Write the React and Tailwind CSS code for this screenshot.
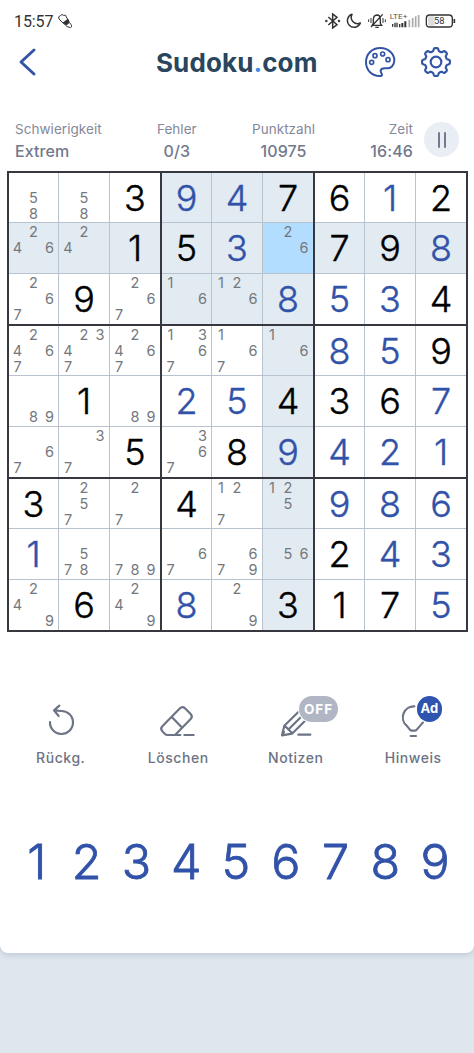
import { useState } from "react"

// value: given digit, "b" prefix: digit entered by the player, "n" prefix: notes
const BOARD = [
  ["n58", "n58", "3", "b9", "b4", "7", "6", "b1", "2"],
  ["n246", "n24", "1", "5", "b3", "n26", "7", "9", "b8"],
  ["n267", "9", "n267", "n16", "n126", "b8", "b5", "b3", "4"],
  ["n2467", "n2347", "n2467", "n1367", "n167", "n16", "b8", "b5", "9"],
  ["n89", "1", "n89", "b2", "b5", "4", "3", "6", "b7"],
  ["n67", "n37", "5", "n367", "8", "b9", "b4", "b2", "b1"],
  ["3", "n257", "n27", "4", "n127", "n125", "b9", "b8", "b6"],
  ["b1", "n578", "n789", "n67", "n679", "n56", "2", "b4", "b3"],
  ["n249", "6", "n249", "b8", "n29", "3", "1", "7", "b5"]
]

const DIGITS = [1, 2, 3, 4, 5, 6, 7, 8, 9]
const BOX = [0, 1, 2]

function gearPath(cx, cy) {
  const points = []
  for (let i = 0; i < 160; i++) {
    const a = (i / 160) * Math.PI * 2
    const r = 37.5 + 4.5 * Math.tanh(2.2 * Math.cos(8 * a))
    points.push(`${(cx + r * Math.cos(a)).toFixed(1)} ${(cy + r * Math.sin(a)).toFixed(1)}`)
  }
  return `M${points.join("L")}Z`
}

function StatusBar() {
  return (
    <div className="flex h-[42px] items-center pl-[14px] pr-[18px] text-[#333]">
      <span className="mt-[2px] font-[Roboto,sans-serif] text-[16px] leading-none tracking-[-0.1px]">15:57</span>
      <svg className="ml-[4px] h-4 w-4" viewBox="170 38 48 48" fill="none" stroke="currentColor" strokeWidth="3" strokeLinejoin="round">
        <path d="M176 56Q172 48 180 46Q184 40 190 45Q198 42 198 50L202 57L188 68Z" />
        <path d="M189 69L203 57L207 66L200 73Z" fill="currentColor" />
        <path d="M190 69Q200 82 211 82Q218 78 208 67" />
      </svg>
      <div className="ml-auto flex items-center">
        <svg className="h-4 w-4" viewBox="270 40 48 48" fill="none" stroke="currentColor" strokeWidth="4.500">
          <path d="M280 52L306 75L293 85V43L306 53L280 76" />
          <circle cx="274" cy="64" r="1.5" />
          <circle cx="312" cy="64" r="1.5" />
        </svg>
        <svg className="ml-[5px] h-4 w-4" viewBox="333 40 48 48" fill="none" stroke="currentColor" strokeWidth="4.5" strokeLinejoin="round">
          <path d="M351 44A20 20 0 1 0 376 70A19 19 0 0 1 351 44Z" />
        </svg>
        <svg className="ml-[5px] h-4 w-5" viewBox="396 40 60 48" fill="none" stroke="currentColor" strokeWidth="4">
          <path d="M411 77H440L436 71V60Q436 46 426 46Q415 47 415 60V71L411 77M421 83H431M443 44L408 82" />
          <path d="M408 55V70M401 59V67M444 55V70M451 59V67" strokeWidth="3" />
        </svg>
        <svg className="ml-[2px] h-4 w-[31px]" viewBox="463 40 93 48">
          <text x="465" y="58" fontSize="24" fontFamily="Roboto, sans-serif" fill="#555" textLength="53" lengthAdjust="spacingAndGlyphs">LTE+</text>
          <path d="M474 73V81M481 69V83M487 69V83M495 73V83" stroke="#333" strokeWidth="4" />
          <path d="M503 70V83M512 65V83" stroke="#333" strokeWidth="6" />
          <path d="M524 60V83M534 55V83M543 50V83M552 46V83" stroke="#aaa" strokeWidth="5" />
        </svg>
        <svg className="ml-[5px] h-4 w-[31px]" viewBox="571 40 93 48">
          <rect x="580" y="50" width="20" height="28" rx="4" fill="#ddd" />
          <rect x="575" y="46" width="78" height="36" rx="10" fill="none" stroke="currentColor" strokeWidth="4" />
          <path d="M659 58V70" stroke="currentColor" strokeWidth="5" />
          <text x="614" y="74" textAnchor="middle" fontSize="28" fontFamily="Roboto, sans-serif" fill="#333">58</text>
        </svg>
      </div>
    </div>
  )
}

function Header() {
  return (
    <div className="flex h-10 items-center pl-[16px] pr-[21px] text-[#3454a6]">
      <button className="w-[140px]">
        <svg className="h-[34px] w-6" viewBox="0 0 24 34" fill="none" stroke="currentColor" strokeWidth="3" strokeLinecap="round" strokeLinejoin="round">
          <path d="M18 5L5 17L18 29" />
        </svg>
      </button>
      <h1 className="mt-[2px] text-[26px] font-bold leading-none tracking-[0.1px] text-[#2a455e]">
        Sudoku<span className="text-[#3b8ee8]">.</span>com
      </h1>
      <div className="ml-auto flex gap-[22px]">
        <svg className="h-[34px] w-[34px]" viewBox="388 135 102 102" fill="none" stroke="currentColor" strokeWidth="6">
          <path d="M441 228C415 230 397 210 397 187C397 162 415 144 440 144C464 144 482 161 482 181C482 197 471 206 458 205C449 204 442 206 441 212C440 218 446 221 445 225C444 227 443 228 441 228Z" />
          <circle cx="424" cy="167" r="6" strokeWidth="5" />
          <circle cx="447" cy="162" r="6" strokeWidth="5" />
          <circle cx="463" cy="179" r="6" strokeWidth="5" />
          <circle cx="414" cy="187" r="6" strokeWidth="5" />
        </svg>
        <svg className="h-[34px] w-[34px]" viewBox="0 0 102 102" fill="none" stroke="currentColor" strokeWidth="6.5" strokeLinejoin="round">
          <path d={gearPath(51, 51)} />
          <circle cx="51" cy="51" r="16" />
        </svg>
      </div>
    </div>
  )
}

function Stat({ label, value, className }) {
  return (
    <div className={className}>
      <div className="text-[13.5px] leading-[18px] tracking-[0.05px] text-[#84899a]">{label}</div>
      <div className="mt-[4px] text-[16px] font-medium leading-[18px] tracking-[0.1px] text-[#72788c]">{value}</div>
    </div>
  )
}

function Stats() {
  return (
    <div className="mt-[38px] flex h-[51px] items-start pl-[15px] pr-[15px]">
      <div className="flex w-[398px] justify-between">
        <Stat label="Schwierigkeit" value="Extrem" />
        <Stat label="Fehler" value="0/3" className="text-center" />
        <Stat label="Punktzahl" value="10975" className="text-center" />
        <Stat label="Zeit" value="16:46" className="text-right" />
      </div>
      <button className="ml-auto mt-[2px] flex h-[35px] w-[35px] items-center justify-center gap-[4px] rounded-full bg-[#e9edf4]">
        <span className="h-4 w-[2px] rounded-full bg-[#737a90]" />
        <span className="h-4 w-[2px] rounded-full bg-[#737a90]" />
      </button>
    </div>
  )
}

function Cell({ data, tone, onClick }) {
  const isNote = data[0] === "n"
  const entered = data[0] === "b"
  return (
    <div onClick={onClick} className={`flex items-center justify-center ${tone}`}>
      {isNote ? (
        <div className="grid shrink-0 grid-cols-[16px_16px_16px] grid-rows-[16px_16px_16px] text-center text-[14.5px] leading-[16px] text-[#74787d]">
          {DIGITS.map((d) => (
            <span key={d}>{data.includes(d) ? d : ""}</span>
          ))}
        </div>
      ) : (
        <span className={`text-[36px] font-light leading-[48px] [-webkit-text-stroke:0.4px] ${entered ? "text-[#3152a8]" : "text-black"}`}>
          {data.replace("b", "")}
        </span>
      )}
    </div>
  )
}

function Board() {
  const [selected, setSelected] = useState([1, 5])
  const [sr, sc] = selected

  const toneOf = (r, c) => {
    if (r === sr && c === sc) return "bg-[#b3ddff]"
    const sameBox = Math.floor(r / 3) === Math.floor(sr / 3) && Math.floor(c / 3) === Math.floor(sc / 3)
    return r === sr || c === sc || sameBox ? "bg-[#e2eaf2]" : "bg-white"
  }

  return (
    <div className="ml-[7px] grid w-[461px] grid-cols-3 gap-[2px] bg-[#36373f] p-[2px]">
      {BOX.map((br) =>
        BOX.map((bc) => (
          <div
            key={`${br}${bc}`}
            className="grid grid-cols-[49px_50px_50px] grid-rows-[49px_50px_50px] gap-px bg-[#b9c3d0]"
          >
            {BOX.map((r) =>
              BOX.map((c) => {
                const row = br * 3 + r
                const col = bc * 3 + c
                return (
                  <Cell
                    key={`${row}${col}`}
                    data={BOARD[row][col]}
                    tone={toneOf(row, col)}
                    onClick={() => setSelected([row, col])}
                  />
                )
              })
            )}
          </div>
        ))
      )}
    </div>
  )
}

function Tool({ label, viewBox, badge, children }) {
  return (
    <button className="flex flex-col items-center text-[#6b7385]">
      <div className="relative h-10 w-10">
        <svg className="h-10 w-10" viewBox={viewBox} fill="none" stroke="currentColor" strokeWidth="6.500" strokeLinecap="round" strokeLinejoin="round">
          {children}
        </svg>
        {badge}
      </div>
      <span className="mt-[9px] text-[14px] font-medium leading-[18px] tracking-[0.55px]">{label}</span>
    </button>
  )
}

function Toolbar() {
  return (
    <div className="mt-[68px] grid grid-cols-4 px-[2px]">
      <Tool label="Rückg." viewBox="121 45 120 120">
        <path d="M148 111A34.500 34.500 0 1 0 182 78L161 76M176 62L160 76L174 93" />
      </Tool>
      <Tool label="Löschen" viewBox="475 45 120 120">
        <path d="M542 150H503Q499 150 496 147L488 139Q481 131 488 124L541 70Q548 63 556 70L573 87Q580 95 573 102L527 149M517 97L546 127M554 150H582" />
      </Tool>
      <Tool
        label="Notizen"
        viewBox="125 45 120 120"
        badge={
          <span className="absolute -top-[4px] left-[23.500px] flex h-[25.500px] w-[38.500px] items-center justify-center rounded-full bg-[#b0b6c4] text-[13.5px] font-bold tracking-[1px] text-white ring-1 ring-white">
            OFF
          </span>
        }
      >
        <path d="M195 78L150 122L143 151L173 146L214 106M152 123L173 144M163 133L206 90M143 151L149 141M192 149H228" />
      </Tool>
      <Tool
        label="Hinweis"
        viewBox="477 45 120 120"
        badge={
          <span className="absolute -top-[4px] left-[23.500px] flex h-[25.500px] w-[25.500px] items-center justify-center rounded-full bg-[#2f54b0] text-[13px] font-bold tracking-[0.3px] text-white ring-1 ring-white">
            Ad
          </span>
        }
      >
        <path d="M541 64A33 33 0 0 0 518 122L527 133Q529 137 533 137H543Q547 137 549 133L567 112M530 153H546" />
      </Tool>
    </div>
  )
}

export default function App() {
  return (
    <div className="min-h-[1053px] w-[474px] overflow-hidden bg-[#dfe6ee] font-[Inter,sans-serif]">
      <div className="h-[953px] rounded-b-lg bg-white shadow-[0_2px_6px_rgba(60,80,110,0.2)]">
        <StatusBar />
        <Header />
        <Stats />
        <Board />
        <Toolbar />
        <div className="mt-[65px] grid grid-cols-9 pl-[12px] pr-[14px] text-center text-[48.5px] font-light leading-[60px] text-[#3152a8] [-webkit-text-stroke:0.8px]">
          {DIGITS.map((d) => (
            <button key={d}>{d}</button>
          ))}
        </div>
      </div>
    </div>
  )
}
